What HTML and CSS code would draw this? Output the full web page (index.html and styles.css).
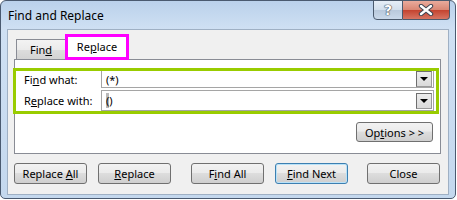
FILE: index.html
```html
<!DOCTYPE html>
<html lang="en">
<head>
    <meta charset="UTF-8">
    <title>Find and Replace</title>
    <link rel="stylesheet" href="styles.css">
</head>
<body>
    <div class="window">
        <div class="titlebar">
            <span class="title">Find and Replace</span>
            <div class="caption">
                <div class="cap help">?</div>
                <div class="cap close">
                    <svg width="16" height="12" viewBox="0 0 16 12">
                        <path d="M3 2 L13 10 M13 2 L3 10" stroke="#3b4250" stroke-width="4.4" stroke-linecap="round"/>
                        <path d="M3 2 L13 10 M13 2 L3 10" stroke="#ffffff" stroke-width="2.4" stroke-linecap="round"/>
                    </svg>
                </div>
            </div>
        </div>
        <div class="client">
            <div class="tabs">
                <div class="tab">Fin<u>d</u></div>
                <div class="tab active">Re<u>p</u>lace</div>
            </div>
            <div class="panel">
                <div class="fields">
                    <div class="row first">
                        <span class="label">Fi<u>n</u>d what:</span>
                        <div class="combo">
                            <span class="value">(*)</span>
                            <span class="arrow"></span>
                        </div>
                    </div>
                    <div class="row second">
                        <span class="label">R<u>e</u>place with:</span>
                        <div class="combo">
                            <span class="value"><span class="sel">(</span>)</span>
                            <span class="arrow"></span>
                        </div>
                    </div>
                </div>
                <div class="options-row">
                    <button class="btn options">Op<u>t</u>ions &gt; &gt;</button>
                </div>
            </div>
            <div class="buttons">
                <button class="btn">Replace <u>A</u>ll</button>
                <button class="btn"><u>R</u>eplace</button>
                <button class="btn find-all">F<u>i</u>nd All</button>
                <button class="btn default"><u>F</u>ind Next</button>
                <button class="btn close-btn">Close</button>
            </div>
        </div>
    </div>
</body>
</html>
```

FILE: styles.css
```css
body {
    margin: 0;
    background: #ffffff;
    font-family: "Noto Sans", "Open Sans", sans-serif;
    font-size: 11px;
    color: #000;
}
.window {
    width: 456px;
    height: 199px;
    box-sizing: border-box;
    border: 1px solid #4a5a70;
    border-radius: 6px 6px 5px 5px;
    background: linear-gradient(#bad1eb, #cfe0f3 28px, #c4d8ee);
    display: flex;
    flex-direction: column;
}
.titlebar {
    height: 28px;
    display: flex;
    justify-content: space-between;
}
.title {
    padding: 6px 0 0 7px;
    font-size: 12px;
}
.caption {
    display: flex;
    margin: -1px 5px 0 0;
    height: 20px;
}
.cap {
    box-sizing: border-box;
    height: 20px;
    border: 1px solid #4b5a6d;
    display: flex;
    align-items: center;
    justify-content: center;
}
.help {
    width: 30px;
    border-radius: 0 0 0 4px;
    background: linear-gradient(#e6eef7, #d2dfec 50%, #b9c9dc 51%, #cad9ea);
    color: #fff;
    font-family: "DejaVu Sans", sans-serif;
    font-size: 14px;
    font-weight: bold;
    text-shadow: 0 0 1px #3b4250, 0 0 1px #3b4250, 0 0 1px #3b4250;
}
.close {
    width: 47px;
    border-left: none;
    border-radius: 0 0 4px 0;
    background: linear-gradient(#e9ab9c, #d98673 50%, #c4432f 51%, #d77563);
}
.client {
    margin: 0 6px;
    height: 166px;
    box-sizing: border-box;
    border: 1px solid #9fb0c4;
    background: #f0f0f0;
    padding: 4px 7px 0 6px;
}
.tabs {
    display: flex;
    align-items: flex-end;
    height: 25px;
    margin-left: 2px;
}
.tab {
    box-sizing: border-box;
    width: 49px;
    height: 20px;
    border: 1px solid #898c95;
    border-bottom: none;
    border-right: none;
    background: linear-gradient(#f3f3f3, #ebebeb 50%, #dddddd 51%, #d3d3d3);
    text-align: center;
    line-height: 20px;
}
.tab.active {
    width: 64px;
    height: 26px;
    border: 3px solid #ff00ff;
    background: #ffffff;
    margin-bottom: -1px;
    position: relative;
    z-index: 1;
    line-height: 20px;
}
.panel {
    box-sizing: border-box;
    height: 95px;
    border: 1px solid #898c95;
    background: #ffffff;
    padding-top: 8px;
}
.fields {
    margin: 0 1px 0 -2px;
    border: 3px solid #99cc00;
}
.row {
    display: flex;
    align-items: stretch;
}
.row.first {
    height: 17px;
}
.row.second {
    height: 21px;
    margin-top: 2px;
}
.label {
    width: 85px;
    box-sizing: border-box;
    padding-left: 8px;
    display: flex;
    align-items: center;
}
.combo {
    flex: 1;
    margin-right: 2px;
    box-sizing: border-box;
    border: 1px solid #a5a5a5;
    display: flex;
    align-items: center;
}
.row.first .combo {
    border-top: none;
}
.value {
    flex: 1;
    padding-left: 4px;
}
.sel {
    background: #b9b9b9;
}
.arrow {
    width: 16px;
    height: 16px;
    margin-right: 1px;
    box-sizing: border-box;
    border: 1px solid #6e6e6e;
    border-right-color: #9a9a9a;
    border-bottom-color: #9a9a9a;
    background: linear-gradient(#ececec, #dadada);
    display: flex;
    align-items: center;
    justify-content: center;
}
.arrow::after {
    content: "";
    border-left: 4px solid transparent;
    border-right: 4px solid transparent;
    border-top: 4px solid #000;
}
.options-row {
    display: flex;
    justify-content: flex-end;
    margin-top: 8px;
    padding-right: 7px;
}
.btn {
    box-sizing: border-box;
    width: 73px;
    height: 21px;
    padding: 0;
    border: 1px solid #707070;
    border-radius: 3px;
    background: linear-gradient(#f2f2f2, #ebebeb 45%, #dddddd 50%, #cfcfcf);
    font: inherit;
    color: #000;
}
.btn.options {
    width: 77px;
    height: 20px;
}
.btn.default {
    border-color: #3c7fb1;
    box-shadow: inset 0 0 0 1px #b9e2f8;
}
.buttons {
    display: flex;
    gap: 11px;
    margin-top: 9px;
}
.find-all {
    margin-left: 9px;
}
.close-btn {
    margin-left: 8px;
}
```
